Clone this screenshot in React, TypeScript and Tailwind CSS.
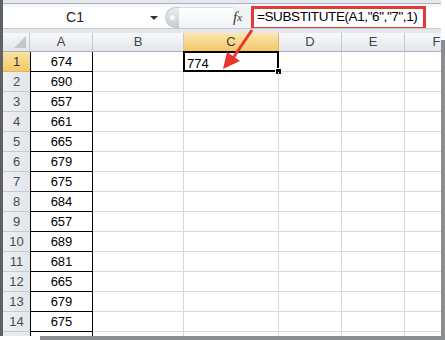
import React from 'react';

const values = [674, 690, 657, 661, 665, 679, 675, 684, 657, 689, 681, 665, 679, 675];
const columns = ['A', 'B', 'C', 'D', 'E', 'F'];
const font = { fontFamily: '"Liberation Sans", Arial, sans-serif' };

const HeaderCell: React.FC<{ label: string; active?: boolean }> = ({ label, active }) => (
  <div
    className={`h-[19px] flex items-center justify-center text-[13px] border-r border-b ${
      active
        ? 'bg-gradient-to-b from-[#fbe7ad] to-[#f3c766] border-r-[#e0b460] border-b-[#e7a93a] text-[#3b3b3b]'
        : 'bg-gradient-to-b from-[#f7f8fa] to-[#e3e6ea] border-r-[#c5c9cf] border-b-[#a9afb8] text-[#3f4650]'
    }`}
  >
    {label}
  </div>
);

const App: React.FC = () => {
  return (
    <div className="w-[445px] h-[340px] bg-white relative overflow-hidden select-none" style={font}>
      <div className="flex h-[336px]">
        <div className="w-[3px] shrink-0 bg-[#5e6166]" />
        <div className="w-[438px] shrink-0 flex flex-col overflow-hidden">
          {/* formula bar strip */}
          <div className="h-[3px] bg-[#e4e8ed]" />
          <div className="h-px bg-[#aab1bb]" />
          <div className="h-[3px] bg-[#f3f5f7]" />
          <div className="h-[21px] bg-white flex items-center">
            <div className="w-[144px] shrink-0 text-center text-[14px] text-[#222]">C1</div>
            <div className="shrink-0 w-0 h-0 border-l-[4px] border-r-[4px] border-t-[4px] border-l-transparent border-r-transparent border-t-[#333] ml-[3px]" />
            <div className="shrink-0 ml-[7px] w-[14px] h-[21px] rounded-l-full bg-gradient-to-b from-[#e9ecef] to-[#c9cdd3] border border-[#c3c8cf] border-r-0 flex items-center pl-[4px]">
              <div className="w-[5px] h-[5px] rounded-full bg-[#f6f7f8]" />
            </div>
            <div className="w-[54px] shrink-0 h-[21px] border-t border-[#d6dadf] bg-gradient-to-b from-white to-[#f1f3f5]" />
            <div className="w-[18px] shrink-0 h-[21px] flex items-center bg-[#f1f3f5] text-[15px] italic text-[#333] leading-none" style={{ fontFamily: '"Liberation Serif", serif' }}>
              f<span className="text-[11px]">x</span>
            </div>
            <div className="w-[175px] shrink-0 h-[24px] overflow-hidden whitespace-nowrap border-[3px] border-[#e23a36] flex items-center pl-[3px] text-[13.5px] tracking-[-0.4px] text-black">
              =SUBSTITUTE(A1,"6","7",1)
            </div>
          </div>
          <div className="h-px bg-[#c5cad1]" />
          <div className="h-[4px] bg-[#e4e7eb]" />

          {/* sheet grid */}
          <div className="grid grid-cols-[27px_63px_91px_95px_63px_63px_64px] w-[466px]">
            <div className="h-[19px] relative bg-gradient-to-b from-[#f7f8fa] to-[#e3e6ea] border-r border-b border-r-[#c5c9cf] border-b-[#a9afb8]">
              <svg className="absolute right-[3px] bottom-[3px]" width="12" height="12" viewBox="0 0 12 12">
                <polygon points="12,0 12,12 0,12" fill="#c3c7cd" />
              </svg>
            </div>
            {columns.map((c) => (
              <HeaderCell key={c} label={c} active={c === 'C'} />
            ))}

            {values.map((v, i) => (
              <React.Fragment key={i}>
                <div
                  className={`h-[20px] flex items-center justify-center text-[13px] border-b ${
                    i === 0
                      ? 'bg-gradient-to-b from-[#fbe2a0] to-[#f4c965] border-b-[#e0b460] text-[#333]'
                      : 'bg-gradient-to-r from-[#eef0f3] to-[#e2e5e9] border-b-[#c5c9cf] text-[#444c57]'
                  }`}
                >
                  {i + 1}
                </div>
                <div className="h-[20px] flex items-center justify-center text-[13px] text-black border-l border-r border-b border-black">
                  {v}
                </div>
                <div className="h-[20px] border-r border-b border-[#d8d8d8]" />
                <div className="h-[20px] border-r border-b border-[#d8d8d8] relative text-[13px] text-black">
                  {i === 0 && (
                    <>
                      <div className="absolute -left-px -top-px -right-px bottom-[-1px] border-2 border-black" />
                      <span className="absolute left-[3px] top-[2px]">774</span>
                      <div className="absolute -right-[3px] -bottom-[3px] w-[5px] h-[5px] bg-black outline outline-1 outline-white" />
                    </>
                  )}
                </div>
                <div className="h-[20px] border-r border-b border-[#d8d8d8]" />
                <div className="h-[20px] border-r border-b border-[#d8d8d8]" />
                <div className="h-[20px] border-b border-[#d8d8d8]" />
              </React.Fragment>
            ))}
            <div className="h-[4px] bg-[#e8eaed]" />
            <div className="h-[4px] border-l border-r border-black" />
            <div className="h-[4px] border-r border-[#d8d8d8]" />
            <div className="h-[4px] border-r border-[#d8d8d8]" />
            <div className="h-[4px] border-r border-[#d8d8d8]" />
            <div className="h-[4px] border-r border-[#d8d8d8]" />
            <div className="h-[4px]" />
          </div>
        </div>
        <div className="w-[4px] shrink-0 flex flex-col">
          <div className="h-[40px] bg-white" />
          <div className="flex-1 bg-[#8b8d90]" />
        </div>
      </div>
      <div className="flex h-[4px]">
        <div className="w-[40px] bg-white" />
        <div className="flex-1 bg-[#8b8d90]" />
      </div>

      {/* red annotation arrow */}
      <svg className="absolute left-0 top-0 pointer-events-none" width="445" height="340">
        <line x1="252" y1="30" x2="233" y2="58" stroke="#e8352f" strokeWidth="3" />
        <polygon points="223,69 227,52 240,61" fill="#e8352f" />
      </svg>
    </div>
  );
};

export default App;
